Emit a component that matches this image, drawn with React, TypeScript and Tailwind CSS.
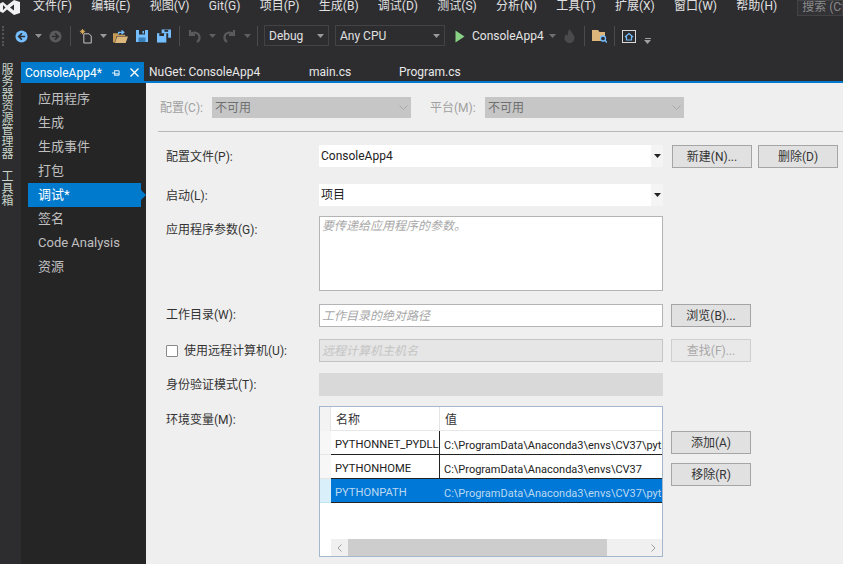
const font = { fontFamily: 'Roboto, "Noto Sans CJK SC", sans-serif' };

const menus = ['文件(F)', '编辑(E)', '视图(V)', 'Git(G)', '项目(P)', '生成(B)', '调试(D)', '测试(S)', '分析(N)', '工具(T)', '扩展(X)', '窗口(W)', '帮助(H)'];
const pages = ['应用程序', '生成', '生成事件', '打包', '调试*', '签名', 'Code Analysis', '资源'];

const Caret = ({ color = '#999999' }: { color?: string }) => (
  <svg width="7" height="4" viewBox="0 0 7 4" className="block shrink-0">
    <path d="M0 0h7L3.5 4z" fill={color} />
  </svg>
);

const Sep = () => <div className="w-px h-[20px] bg-[#4a4a4d] shrink-0" />;

const Btn = ({ label, disabled }: { label: string; disabled?: boolean }) => (
  <button
    type="button"
    className={`block w-[80px] h-[23px] shrink-0 border text-[12px] leading-none ${
      disabled ? 'border-[#cfcfcf] bg-[#e9e9e9] text-[#a8a8a8]' : 'border-[#a5a5a5] bg-[#e1e1e1] text-[#333333]'
    }`}
  >
    {label}
  </button>
);

const Label = ({ text, top = 'pt-[5px]' }: { text: string; top?: string }) => (
  <div className={`w-[153px] shrink-0 text-[12px] text-[#333333] leading-none ${top}`}>{text}</div>
);

const Combo = ({ value }: { value: string }) => (
  <div className="w-[344px] h-[22px] bg-white flex items-center justify-between shrink-0">
    <span className="pl-[2px] text-[12px] text-[#222222]">{value}</span>
    <div className="w-[12px] h-full bg-[#f4f4f4] flex items-center justify-center">
      <Caret color="#222222" />
    </div>
  </div>
);

const EnvRow = ({ name, value, selected }: { name: string; value: string; selected?: boolean }) => (
  <div className="flex h-[24px] text-[11.2px] leading-none">
    <div className={`w-[11px] shrink-0 border-b ${selected ? 'bg-[#d9f0fb] border-[#bfe3f5]' : 'bg-[#f7f7f7] border-[#e6e6e6]'}`} />
    <div
      className={`flex flex-1 min-w-0 border-b border-[#222222] ${selected ? 'bg-[#0078d7] text-[#bcd8f2]' : 'bg-white text-[#222222]'}`}
    >
      <div className={`w-[109px] shrink-0 pl-[4px] pt-[5px] flex items-center whitespace-nowrap ${selected ? '' : 'border-r border-[#222222]'}`}>{name}</div>
      <div className="flex-1 min-w-0 pl-[4px] pt-[5px] flex items-center overflow-hidden whitespace-nowrap text-[11px]">{value}</div>
    </div>
  </div>
);

export default function App() {
  return (
    <div style={font} className="w-[843px] h-[564px] bg-[#2d2d30] overflow-hidden flex flex-col">
      {/* menu */}
      <div className="h-[22px] shrink-0 flex items-start text-[12px] leading-[13px] text-[#e0e0e0]">
        <svg width="20" height="15" viewBox="0 0 20 15" className="shrink-0">
          <path d="M0 3.5 3 2l4 3.5L14 0l6 2v11l-6 2-7-5.500L3 13l-3-1.500zM3 5v5l2.500-2.500zM14 4.500 10 7.500l4 3z" fill="#f1f1f1" fillRule="evenodd" />
        </svg>
        <div className="flex gap-[19.3px] ml-[13px]">
          {menus.map((m) => (
            <span key={m} className="whitespace-nowrap">{m}</span>
          ))}
        </div>
        <div className="ml-[20px] h-[16px] flex-1 border border-[#434346] bg-[#333337] text-[#8a8a8a] pl-[4px] overflow-hidden whitespace-nowrap">搜索 (Ctrl+Q)</div>
      </div>

      {/* toolbar */}
      <div className="h-[38px] shrink-0 flex items-start pt-[3px] text-[12px] text-[#e0e0e0]">
        <div className="w-[6px] h-[20px] ml-[2px] mt-[1px] border-l-2 border-dotted border-[#55555a] shrink-0" />
        <div className="flex items-center h-[22px] ml-[7px]">
          <svg width="13" height="13" viewBox="0 0 14 14" className="shrink-0">
            <circle cx="7" cy="7" r="6.500" fill="#75beff" />
            <path d="M7.500 3.500 4 7l3.500 3.500M4.500 7H11" stroke="#2d2d30" strokeWidth="1.800" fill="none" />
          </svg>
          <span className="ml-[7px]"><Caret color="#8f8f8f" /></span>
          <svg width="13" height="13" viewBox="0 0 14 14" className="ml-[7px] shrink-0">
            <circle cx="7" cy="7" r="6.500" fill="#5a5a5c" />
            <path d="M6.500 3.500 10 7l-3.500 3.500M9.500 7H3" stroke="#2d2d30" strokeWidth="1.800" fill="none" />
          </svg>
          <div className="ml-[8px]"><Sep /></div>
          <svg width="14" height="16" viewBox="0 0 16 18" className="ml-[8px] shrink-0">
            <path d="M5.500 6.500h6l2.500 2.500v8H5.500z" fill="#2d2d30" stroke="#d8d8d8" />
            <path d="M4 1v6M1 4h6M2 2l4 4M6 2 2 6" stroke="#e8b75f" strokeWidth="1" />
          </svg>
          <span className="ml-[7px]"><Caret color="#999999" /></span>
          <svg width="15" height="15" viewBox="0 0 16 15" className="ml-[6px] shrink-0">
            <path d="M0 4h5l1 1.500h7V7H4l-2 7H0z" fill="#c69a55" />
            <path d="M4.500 7.500H16l-2.500 7H2z" fill="#dcb67a" />
            <path d="M6 5V3h5M9 1l2.500 2L9 5" stroke="#75beff" strokeWidth="1.400" fill="none" />
          </svg>
          <svg width="12" height="12" viewBox="0 0 12 12" className="ml-[8px] shrink-0">
            <path d="M0 0h12v12H0z" fill="#75beff" />
            <path d="M3 0h6v4.500H3z" fill="#2d2d30" />
            <path d="M6.500 1H8v2.500H6.500z" fill="#75beff" />
            <path d="M2.500 7.500h7V12h-7z" fill="#3b7fb8" />
          </svg>
          <svg width="14" height="14" viewBox="0 0 15 14" className="ml-[9px] shrink-0">
            <path d="M5 0h10v9h-3V4H5z" fill="#75beff" />
            <path d="M0 4h10v10H0z" fill="#75beff" />
            <path d="M2.500 4h5v3h-5z" fill="#2d2d30" />
            <path d="M8 0.500h4v2H8z" fill="#2d2d30" />
          </svg>
          <div className="ml-[8px]"><Sep /></div>
          <svg width="13" height="14" viewBox="0 0 13 14" className="ml-[8px] shrink-0">
            <path d="M2 1v5h5M2.500 5.500C5 2.500 11 3 11.500 8c.2 2-1 4-2.500 5" stroke="#5a5a5c" strokeWidth="2.200" fill="none" />
          </svg>
          <span className="ml-[8px]"><Caret color="#5f5f61" /></span>
          <svg width="13" height="14" viewBox="0 0 13 14" className="ml-[7px] shrink-0">
            <path d="M11 1v5H6M10.500 5.500C8 2.500 2 3 1.500 8c-.2 2 1 4 2.500 5" stroke="#5a5a5c" strokeWidth="2.200" fill="none" />
          </svg>
          <span className="ml-[8px]"><Caret color="#5f5f61" /></span>
          <div className="ml-[6px]"><Sep /></div>
        </div>
        <div className="ml-[6px] w-[65px] h-[21px] border border-[#434346] flex items-center justify-between px-[4px] shrink-0">
          <span>Debug</span>
          <Caret />
        </div>
        <div className="ml-[6px] w-[110px] h-[21px] border border-[#434346] flex items-center justify-between px-[4px] shrink-0">
          <span>Any CPU</span>
          <Caret />
        </div>
        <div className="flex items-center h-[22px]">
          <svg width="10" height="13" viewBox="0 0 10 13" className="ml-[10px] shrink-0">
            <path d="M0.500 0.500 9.500 6.500 0.500 12.500z" fill="#89d185" />
          </svg>
          <span className="ml-[7px] w-[71px] whitespace-nowrap text-[#e4e4e4]">ConsoleApp4</span>
          <span className="ml-[6px]"><Caret color="#707072" /></span>
          <svg width="11" height="14" viewBox="0 0 11 14" className="ml-[8px] shrink-0">
            <path d="M5.500 0C6.500 3 10.500 5 10.500 9c0 3-2.500 5-5 5S.5 12 .5 9c0-2 1-3 2-4 .3 1 .8 1.500 1.300 1.800C3.800 4.500 4 2 5.500 0z" fill="#4a4a4c" />
          </svg>
          <div className="ml-[9px]"><Sep /></div>
          <svg width="15" height="13" viewBox="0 0 15 13" className="ml-[7px] shrink-0">
            <path d="M0 0h6l1.500 2H13v9H0z" fill="#dcb67a" />
            <circle cx="11" cy="8.500" r="2.500" fill="#2d2d30" stroke="#75beff" strokeWidth="1.300" />
            <path d="M12.800 10.300 15 12.500" stroke="#75beff" strokeWidth="1.500" />
          </svg>
          <div className="ml-[7px]"><Sep /></div>
          <svg width="14" height="13" viewBox="0 0 14 13" className="ml-[7px] shrink-0">
            <rect x="0.500" y="0.500" width="13" height="12" fill="none" stroke="#d8d8d8" />
            <path d="M3 7l4-3.500L11 7M4.500 6.500V10h5V6.500" stroke="#75beff" strokeWidth="1.200" fill="none" />
          </svg>
          <div className="ml-[8px] mt-[10px] flex flex-col items-center gap-[1px]">
            <div className="w-[6px] h-px bg-[#a0a0a0]" />
            <Caret color="#a0a0a0" />
          </div>
        </div>
      </div>

      <div className="flex-1 flex min-h-0">
        {/* tool strip */}
        <div className="w-[21px] shrink-0 pt-[3px] text-[12px] leading-[12px] text-[#c8d4c8] flex flex-col items-start gap-[11px]">
          <span className="[writing-mode:vertical-rl]">服务器资源管理器</span>
          <span className="[writing-mode:vertical-rl]">工具箱</span>
        </div>

        <div className="flex-1 flex flex-col min-w-0">
          {/* tabs */}
          <div className="h-[23px] pt-[2px] shrink-0 flex items-stretch border-b-2 border-[#007acc] text-[12px] text-[#e8e8e8]">
            <div className="w-[123px] -mb-[2px] bg-[#007acc] flex items-center pl-[4px] shrink-0 text-white">
              <span className="w-[76px] whitespace-nowrap">ConsoleApp4*</span>
              <svg width="8" height="8" viewBox="0 0 9 9" className="ml-[11px] shrink-0">
                <path d="M0 4.500h3M3 1.500v6M3 2h5v5H3M3 5.500h5" stroke="#ffffff" fill="none" strokeWidth="1" />
              </svg>
              <svg width="9" height="9" viewBox="0 0 9 9" className="ml-[10px] shrink-0">
                <path d="M.5.500l8 8M8.500.500l-8 8" stroke="#ffffff" strokeWidth="1.300" />
              </svg>
            </div>
            <span className="ml-[5px] mt-[1px] w-[111px] whitespace-nowrap">NuGet: ConsoleApp4</span>
            <span className="ml-[49px] mt-[1px] w-[41px] whitespace-nowrap">main.cs</span>
            <span className="ml-[49px] mt-[1px] whitespace-nowrap">Program.cs</span>
          </div>

          <div className="flex-1 flex min-h-0">
            {/* property pages */}
            <div className="w-[125px] shrink-0 bg-[#252526] pt-[4px] pl-[7px] text-[13px] text-[#c0c0c0]">
              {pages.map((p) => (
                <div
                  key={p}
                  className={`relative h-[24px] w-[113px] pl-[10px] flex items-center ${p === '调试*' ? 'bg-[#007acc] text-white' : ''}`}
                >
                  {p}
                  {p === '调试*' && (
                    <div className="absolute -right-[5px] top-[7px] w-0 h-0 border-y-[5px] border-y-transparent border-l-[5px] border-l-[#007acc]" />
                  )}
                </div>
              ))}
            </div>

            {/* form */}
            <div className="flex-1 min-w-0 bg-[#efefef] pt-[14px] pl-[12px]">
              <div className="flex items-center h-[21px] pl-[2px] text-[12px] text-[#a0a0a0]">
                <span className="w-[52px]">配置(C):</span>
                <div className="w-[199px] h-full bg-[#c6c6c6] flex items-center justify-between px-[3px] text-[#6f6f6f]">
                  不可用
                  <svg width="9" height="5" viewBox="0 0 9 5"><path d="M.5.500l4 4 4-4" stroke="#a8a8a8" fill="none" /></svg>
                </div>
                <span className="ml-[19px] w-[55px]">平台(M):</span>
                <div className="w-[199px] h-full bg-[#c6c6c6] flex items-center justify-between px-[3px] text-[#6f6f6f]">
                  不可用
                  <svg width="9" height="5" viewBox="0 0 9 5"><path d="M.5.500l4 4 4-4" stroke="#a8a8a8" fill="none" /></svg>
                </div>
              </div>
              <div className="h-px bg-[#b9b9b9] mt-[13px]" />

              <div className="pl-[8px] pt-[13px]">
                <div className="flex h-[22px]">
                  <Label text="配置文件(P):" top="pt-[6px]" />
                  <Combo value="ConsoleApp4" />
                  <div className="ml-[9px]"><Btn label="新建(N)..." /></div>
                  <div className="ml-[6px]"><Btn label="删除(D)" /></div>
                </div>
                <div className="flex mt-[17px]">
                  <Label text="启动(L):" top="pt-[6px]" />
                  <Combo value="项目" />
                </div>
                <div className="flex mt-[10px]">
                  <Label text="应用程序参数(G):" top="pt-[8px]" />
                  <div className="w-[344px] h-[75px] bg-white border border-[#b4b4b4] pl-[2px] pt-[2px] text-[12px] leading-[14px] italic text-[#a8a8a8]">要传递给应用程序的参数。</div>
                </div>
                <div className="flex mt-[13px]">
                  <Label text="工作目录(W):" />
                  <div className="w-[344px] h-[23px] bg-white border border-[#b4b4b4] pl-[2px] flex items-center text-[12px] italic text-[#a8a8a8]">工作目录的绝对路径</div>
                  <div className="ml-[8px]"><Btn label="浏览(B)..." /></div>
                </div>
                <div className="flex mt-[12px]">
                  <div className="w-[153px] shrink-0 flex items-center text-[12px] text-[#333333]">
                    <div className="w-[12px] h-[12px] bg-white border border-[#8a8a8a] rounded-[1px]" />
                    <span className="ml-[6px]">使用远程计算机(U):</span>
                  </div>
                  <div className="w-[344px] h-[23px] bg-[#e6e6e6] border border-[#c4c4c4] pl-[2px] flex items-center text-[12px] italic text-[#c4c4c4]">远程计算机主机名</div>
                  <div className="ml-[8px]"><Btn label="查找(F)..." disabled /></div>
                </div>
                <div className="flex mt-[11px]">
                  <Label text="身份验证模式(T):" top="pt-[6px]" />
                  <div className="w-[344px] h-[23px] bg-[#d9d9d9]" />
                </div>
                <div className="flex mt-[10px]">
                  <Label text="环境变量(M):" top="pt-[8px]" />
                  <div className="w-[344px] h-[151px] bg-white border border-[#a3b8cf] flex flex-col shrink-0 overflow-hidden">
                    <div className="flex h-[24px] shrink-0 text-[12px] text-[#333333]">
                      <div className="w-[11px] bg-[#f3f3f3] border-r border-[#e4e4e4]" />
                      <div className="w-[109px] pl-[5px] pt-[2px] flex items-center border-r border-[#e4e4e4] border-b border-b-[#e8e8e8]">名称</div>
                      <div className="flex-1 pl-[5px] pt-[2px] flex items-center border-b border-[#e8e8e8]">值</div>
                    </div>
                    <EnvRow name="PYTHONNET_PYDLL" value="C:\ProgramData\Anaconda3\envs\CV37\python37.dll" />
                    <EnvRow name="PYTHONHOME" value="C:\ProgramData\Anaconda3\envs\CV37" />
                    <EnvRow name="PYTHONPATH" value="C:\ProgramData\Anaconda3\envs\CV37\python37.zip" selected />
                    <div className="flex-1" />
                    <div className="h-[17px] ml-[11px] bg-[#f0f0f0] flex items-stretch shrink-0">
                      <div className="w-[17px] flex items-center justify-center">
                        <svg width="5" height="8" viewBox="0 0 5 8"><path d="M4.500.500 1 4l3.500 3.500" stroke="#a0a0a0" fill="none" /></svg>
                      </div>
                      <div className="w-[259px] bg-[#cdcdcd]" />
                      <div className="flex-1 flex items-center justify-end pr-[6px]">
                        <svg width="5" height="8" viewBox="0 0 5 8"><path d="M.5.500 4 4 .5 7.500" stroke="#a0a0a0" fill="none" /></svg>
                      </div>
                    </div>
                  </div>
                  <div className="ml-[8px] pt-[25px] flex flex-col gap-[9px]">
                    <Btn label="添加(A)" />
                    <Btn label="移除(R)" />
                  </div>
                </div>
              </div>
            </div>
          </div>
        </div>
      </div>
    </div>
  );
}
